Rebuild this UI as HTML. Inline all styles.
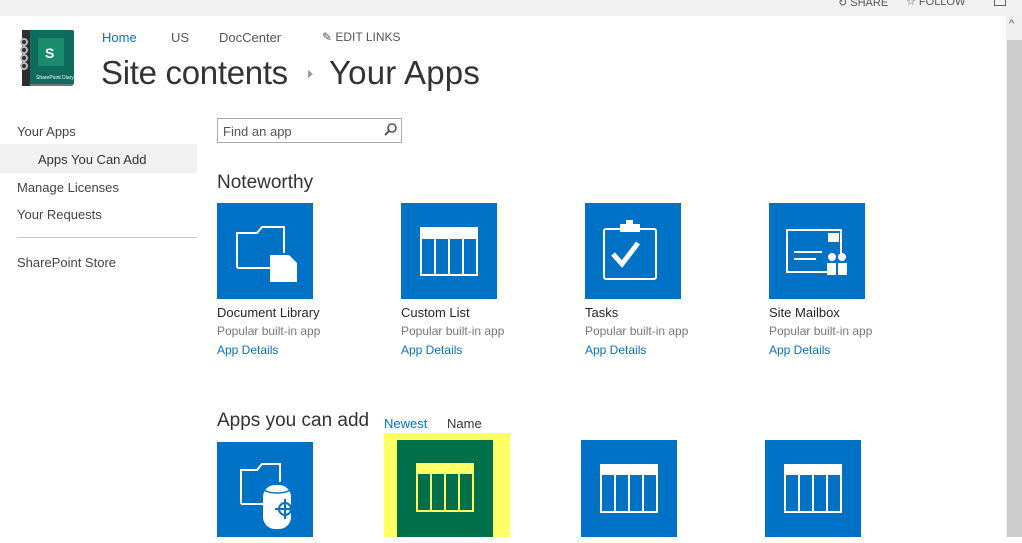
<!DOCTYPE html>
<html><head><meta charset="utf-8"><style>
*{margin:0;padding:0;box-sizing:border-box}
body{width:1022px;height:537px;overflow:hidden;background:#fff;font-family:"Liberation Sans",sans-serif;position:relative;color:#444}
.a{position:absolute;white-space:nowrap}
.tile{position:absolute;width:96px;height:96px;background:#0072c6}
.t1{font-size:13px;color:#262626}
.t2{font-size:12px;color:#777}
.t3{font-size:12px;color:#0072c6}
</style></head><body>
<div class="a" style="left:0;top:0;width:1022px;height:16px;background:#f1f1f1"></div>
<div class="a" style="left:838px;top:-4px;font-size:11px;color:#555">&#x21bb; SHARE</div>
<div class="a" style="left:906px;top:-5px;font-size:11px;color:#555">☆ FOLLOW</div>
<div class="a" style="left:994px;top:-4px;width:12px;height:10px;border:1px solid #666;border-top:none"></div>
<div class="a" style="left:1006px;top:16px;width:16px;height:521px;background:#f0f0f0"></div>
<div class="a" style="left:1007px;top:40px;width:15px;height:497px;background:#cdcdcd"></div>
<div class="a" style="left:1009px;top:18px;font-size:11px;color:#555">^</div>

<svg class="a" style="left:16px;top:28px" width="62" height="62" viewBox="0 0 62 62">
<rect x="6" y="2" width="52" height="56" rx="3" fill="#6a7a78"/>
<rect x="10" y="2" width="48" height="54" rx="2" fill="#0f6b5c"/>
<rect x="6" y="2" width="8" height="56" fill="#2b2f30"/>
<g fill="none" stroke="#bbb" stroke-width="2"><circle cx="8" cy="14" r="3"/><circle cx="8" cy="22" r="3"/><circle cx="8" cy="30" r="3"/><circle cx="8" cy="38" r="3"/></g>
<rect x="22" y="10" width="26" height="28" fill="#1a8a6c"/>
<text x="29" y="30" font-size="14" fill="#fff" font-family="Liberation Sans" font-weight="bold">S</text>
<text x="20" y="51" font-size="5" fill="#fff" font-family="Liberation Sans">SharePoint Diary</text>
</svg>

<div class="a" style="left:102px;top:30px;font-size:13px;color:#0072c6">Home</div>
<div class="a" style="left:171px;top:30px;font-size:13px;color:#555">US</div>
<div class="a" style="left:219px;top:30px;font-size:13px;color:#555">DocCenter</div>
<div class="a" style="left:322px;top:30px;font-size:12px;color:#555">✎ EDIT LINKS</div>
<div class="a" style="left:101px;top:54px;font-size:33px;color:#333;letter-spacing:-0.3px">Site contents</div>
<div class="a" style="left:308px;top:70px;width:0;height:0;border-left:5px solid #999;border-top:4px solid transparent;border-bottom:4px solid transparent"></div>
<div class="a" style="left:329px;top:54px;font-size:33px;color:#333;letter-spacing:0.2px">Your Apps</div>

<div class="a" style="left:17px;top:124px;font-size:13px">Your Apps</div>
<div class="a" style="left:0;top:144px;width:197px;height:29px;background:#f1f1f1"></div>
<div class="a" style="left:38px;top:152px;font-size:13px;color:#333">Apps You Can Add</div>
<div class="a" style="left:17px;top:180px;font-size:13px">Manage Licenses</div>
<div class="a" style="left:17px;top:207px;font-size:13px">Your Requests</div>
<div class="a" style="left:17px;top:237px;width:180px;height:1px;background:#c6c6c6"></div>
<div class="a" style="left:17px;top:255px;font-size:13px">SharePoint Store</div>

<div class="a" style="left:217px;top:118px;width:185px;height:25px;border:1px solid #ababab"></div>
<div class="a" style="left:223px;top:124px;font-size:13px;color:#555">Find an app</div>
<svg class="a" style="left:383px;top:122px" width="16" height="16"><circle cx="9" cy="6" r="4" fill="none" stroke="#555" stroke-width="1.6"/><line x1="6" y1="9" x2="2" y2="13" stroke="#555" stroke-width="2"/></svg>

<div class="a" style="left:217px;top:172px;font-size:19px;color:#333">Noteworthy</div>

<div class="tile" style="left:217px;top:203px"><svg width="96" height="96"><path d="M20 65V30h20l5-6h22v26" fill="none" stroke="#fff" stroke-width="2"/><path d="M20 65h33" stroke="#fff" stroke-width="2"/><path d="M53 52h19l8 8v19H53z" fill="#fff"/></svg></div>
<div class="tile" style="left:401px;top:203px"><svg width="96" height="96"><rect x="19" y="24" width="58" height="49" fill="#fff"/><g fill="#0072c6"><rect x="21" y="36" width="12" height="35"/><rect x="35" y="36" width="12" height="35"/><rect x="49" y="36" width="12" height="35"/><rect x="63" y="36" width="12" height="35"/></g></svg></div>
<div class="tile" style="left:585px;top:203px"><svg width="96" height="96"><rect x="19" y="26" width="52" height="50" rx="2" fill="none" stroke="#fff" stroke-width="2"/><rect x="35" y="21" width="20" height="8" fill="#fff"/><rect x="41" y="17" width="7" height="6" fill="#fff"/><path d="M28 51l9 10 16-21" fill="none" stroke="#fff" stroke-width="5"/></svg></div>
<div class="tile" style="left:769px;top:203px"><svg width="96" height="96"><path d="M72 55V27H18v42h42" fill="none" stroke="#fff" stroke-width="2"/><rect x="59" y="30" width="11" height="9" fill="#fff"/><rect x="25" y="48" width="28" height="2" fill="#fff"/><rect x="25" y="55" width="22" height="2" fill="#fff"/><circle cx="63" cy="54" r="4" fill="#fff"/><circle cx="73" cy="54" r="4" fill="#fff"/><rect x="58" y="60" width="9" height="12" fill="#fff"/><rect x="69" y="60" width="9" height="12" fill="#fff"/></svg></div>

<div class="a t1" style="left:217px;top:305px">Document Library</div>
<div class="a t2" style="left:217px;top:324px">Popular built-in app</div>
<div class="a t3" style="left:217px;top:343px">App Details</div>
<div class="a t1" style="left:401px;top:305px">Custom List</div>
<div class="a t2" style="left:401px;top:324px">Popular built-in app</div>
<div class="a t3" style="left:401px;top:343px">App Details</div>
<div class="a t1" style="left:585px;top:305px">Tasks</div>
<div class="a t2" style="left:585px;top:324px">Popular built-in app</div>
<div class="a t3" style="left:585px;top:343px">App Details</div>
<div class="a t1" style="left:769px;top:305px">Site Mailbox</div>
<div class="a t2" style="left:769px;top:324px">Popular built-in app</div>
<div class="a t3" style="left:769px;top:343px">App Details</div>

<div class="a" style="left:217px;top:410px;font-size:19px;color:#333">Apps you can add</div>
<div class="a" style="left:384px;top:416px;font-size:13px;color:#0072c6">Newest</div>
<div class="a" style="left:447px;top:416px;font-size:13px;color:#333">Name</div>

<div class="tile" style="left:217px;top:442px;height:95px"><svg width="96" height="96"><path d="M24 62V28h16l5-6h18v18" fill="none" stroke="#fff" stroke-width="2"/><path d="M24 62h22" stroke="#fff" stroke-width="2"/><rect x="46" y="43" width="28" height="44" rx="12" fill="#fff"/><ellipse cx="60" cy="46" rx="14" ry="5" fill="none" stroke="#0072c6" stroke-width="1.5"/><circle cx="68" cy="67" r="6" fill="none" stroke="#0072c6" stroke-width="2"/><path d="M68 57v20M58 67h20" stroke="#0072c6" stroke-width="2"/></svg></div>
<div class="a" style="left:384px;top:433px;width:126px;height:104px;background:#ffff66"></div>
<div class="a" style="left:397px;top:440px;width:96px;height:97px;background:#00704a"></div>
<svg class="a" style="left:416px;top:463px" width="58" height="49"><rect width="58" height="49" fill="#ffff66"/><g fill="#00704a"><rect x="2" y="11" width="12" height="36"/><rect x="16" y="11" width="12" height="36"/><rect x="30" y="11" width="12" height="36"/><rect x="44" y="11" width="12" height="36"/></g></svg>
<div class="tile" style="left:581px;top:440px;height:97px"><svg width="96" height="97"><rect x="19" y="24" width="58" height="49" fill="#fff"/><g fill="#0072c6"><rect x="21" y="35" width="12" height="36"/><rect x="35" y="35" width="12" height="36"/><rect x="49" y="35" width="12" height="36"/><rect x="63" y="35" width="12" height="36"/></g></svg></div>
<div class="tile" style="left:765px;top:440px;height:97px"><svg width="96" height="97"><rect x="19" y="24" width="58" height="49" fill="#fff"/><g fill="#0072c6"><rect x="21" y="35" width="12" height="36"/><rect x="35" y="35" width="12" height="36"/><rect x="49" y="35" width="12" height="36"/><rect x="63" y="35" width="12" height="36"/></g></svg></div>
</body></html>
